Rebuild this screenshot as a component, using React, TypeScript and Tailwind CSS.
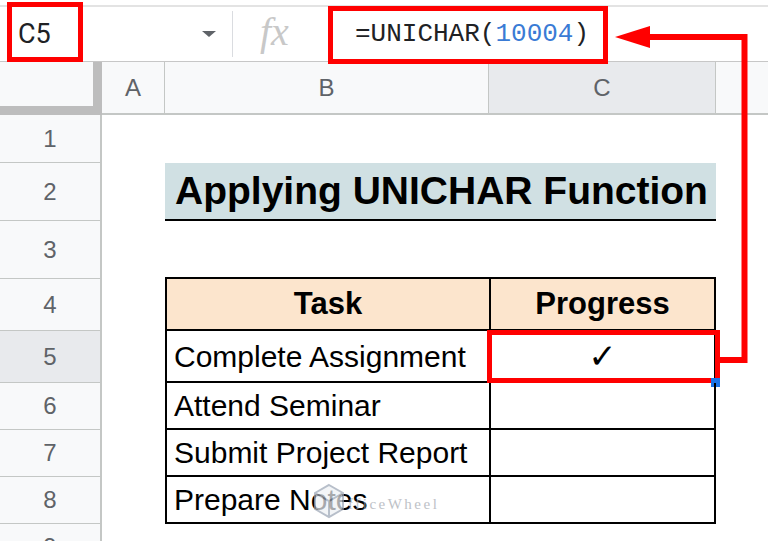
import React from 'react';

const ROWS = [
  { n: 1, h: 'h-[48px]' },
  { n: 2, h: 'h-[58px]' },
  { n: 3, h: 'h-[58px]' },
  { n: 4, h: 'h-[52px]' },
  { n: 5, h: 'h-[52px]' },
  { n: 6, h: 'h-[47px]' },
  { n: 7, h: 'h-[47px]' },
  { n: 8, h: 'h-[47px]' },
  { n: 9, h: 'h-[47px]' },
];

const TASKS: Record<number, string> = {
  5: 'Complete Assignment',
  6: 'Attend Seminar',
  7: 'Submit Project Report',
  8: 'Prepare Notes',
};

const Watermark = () => (
  <div className="absolute left-[145px] top-[6px] flex items-center opacity-70 pointer-events-none">
    <svg width="34" height="36" viewBox="0 0 34 36" fill="none">
      <polygon points="17,2 31,10 31,26 17,34 3,26 3,10" stroke="#9aa4b4" strokeWidth="2" fill="#eef1f5" />
      <polyline points="3,10 17,18 31,10" stroke="#9aa4b4" strokeWidth="2" />
      <line x1="17" y1="18" x2="17" y2="34" stroke="#9aa4b4" strokeWidth="2" />
    </svg>
    <span className="ml-[2px] mt-[6px] text-[15px] tracking-[2.5px] text-[#a3a8b0] font-['Liberation_Serif',serif]">
      fficeWheel
    </span>
  </div>
);

const Row = ({ n, h }: { n: number; h: string }) => {
  const selected = n === 5;
  const tableRow = n >= 4 && n <= 8;
  return (
    <div className={`flex ${h}`}>
      <div
        className={`w-[102px] shrink-0 flex items-center justify-center border-r-2 border-b border-[#c4c7c5] text-[24px] text-[#5f6368] ${
          selected ? 'bg-[#e8eaed]' : 'bg-[#f8f9fa]'
        }`}
      >
        {n}
      </div>
      <div className="w-[63px] shrink-0" />
      {n === 2 ? (
        <div className="w-[551px] shrink-0 bg-[#d0e0e3] border-b-2 border-black flex items-center pl-[10px] text-[39px] font-bold text-black whitespace-nowrap">
          Applying UNICHAR Function
        </div>
      ) : n === 3 ? (
        <>
          <div className="w-[324px] shrink-0 border-b-2 border-black" />
          <div className="w-[227px] shrink-0 border-b-2 border-black" />
        </>
      ) : n === 4 ? (
        <>
          <div className="w-[324px] shrink-0 bg-[#fce5cd] border-l-2 border-b-2 border-black flex items-center justify-center text-[31px] font-bold text-black">
            Task
          </div>
          <div className="w-[227px] shrink-0 bg-[#fce5cd] border-l-2 border-r-2 border-b-2 border-black flex items-center justify-center text-[31px] font-bold text-black">
            Progress
          </div>
        </>
      ) : tableRow ? (
        <>
          <div className="relative w-[324px] shrink-0 border-l-2 border-b-2 border-black flex items-center pl-[7px] text-[30px] text-black whitespace-nowrap">
            {TASKS[n]}
            {n === 8 && <Watermark />}
          </div>
          <div className="relative w-[227px] shrink-0 border-l-2 border-r-2 border-b-2 border-black flex items-center justify-center">
            {selected && (
              <>
                <span className="text-[34px] leading-none text-black font-['DejaVu_Sans',sans-serif]">✓</span>
                <div className="absolute -left-[4px] -top-[1px] w-[233px] h-[53px] border-[5px] border-[#ff0000]" />
                <div className="absolute left-[220px] top-[47px] w-[9px] h-[9px] bg-[#1a73e8]" />
              </>
            )}
          </div>
        </>
      ) : (
        <div className="w-[551px] shrink-0" />
      )}
      <div className="flex-1" />
    </div>
  );
};

export default function App() {
  return (
    <div className="relative w-[768px] h-[541px] overflow-hidden bg-white font-['Liberation_Sans',Arial,sans-serif]">
      {/* Top strip */}
      <div className="h-[7px] border-b-2 border-[#e3e3e3]" />

      {/* Formula bar */}
      <div className="relative flex items-center h-[55px] border-b border-[#c7c7c7]">
        <div className="relative w-[232px] h-full flex items-center shrink-0">
          <span className="pl-[18px] text-[27px] text-[#202124] font-['Roboto',sans-serif]">C5</span>
          <div className="ml-auto mr-[16px] w-0 h-0 border-l-[7px] border-r-[7px] border-t-[6px] border-l-transparent border-r-transparent border-t-[#5f6368]" />
          <div className="absolute left-[7px] -top-[5px] w-[76px] h-[60px] border-[5px] border-[#ff0000]" />
        </div>
        <div className="w-px h-[46px] bg-[#dadce0] shrink-0" />
        <div className="w-[95px] shrink-0 pl-[27px] italic text-[40px] leading-none text-[#c8c8c8] font-['Liberation_Serif',serif] -mt-[4px]">
          fx
        </div>
        <div className="relative h-full flex items-center pl-[27px] w-[280px] shrink-0">
          <span className="text-[26px] text-[#202124] font-['Liberation_Mono',monospace] whitespace-nowrap">
            =UNICHAR(<span className="text-[#3a7bd5]">10004</span>)
          </span>
          <div className="absolute left-0 -top-[1px] w-[280px] h-[58px] border-[5px] border-[#ff0000]" />
        </div>
      </div>

      {/* Column headers */}
      <div className="flex h-[53px]">
        <div className="w-[102px] shrink-0 bg-[#f8f9fa] border-r-[9px] border-b-[9px] border-[#bdbdbd]" />
        <div className="w-[63px] shrink-0 bg-[#f8f9fa] border-r border-b-2 border-[#c4c7c5] flex items-center justify-center text-[24px] text-[#5f6368]">
          A
        </div>
        <div className="w-[324px] shrink-0 bg-[#f8f9fa] border-r border-b-2 border-[#c4c7c5] flex items-center justify-center text-[24px] text-[#5f6368]">
          B
        </div>
        <div className="w-[227px] shrink-0 bg-[#e8eaed] border-r border-b-2 border-[#c4c7c5] flex items-center justify-center text-[24px] text-[#5f6368]">
          C
        </div>
        <div className="flex-1 bg-[#f8f9fa] border-b-2 border-[#c4c7c5]" />
      </div>

      {/* Rows */}
      {ROWS.map((r) => (
        <Row key={r.n} n={r.n} h={r.h} />
      ))}

      {/* Arrow annotation */}
      <svg className="absolute inset-0 pointer-events-none" width="768" height="541">
        <polyline
          points="716,360 744.5,360 744.5,37 646,37"
          fill="none"
          stroke="#ff0000"
          strokeWidth="6"
        />
        <polygon points="615,37 650,26 650,48" fill="#ff0000" />
      </svg>
    </div>
  );
}
